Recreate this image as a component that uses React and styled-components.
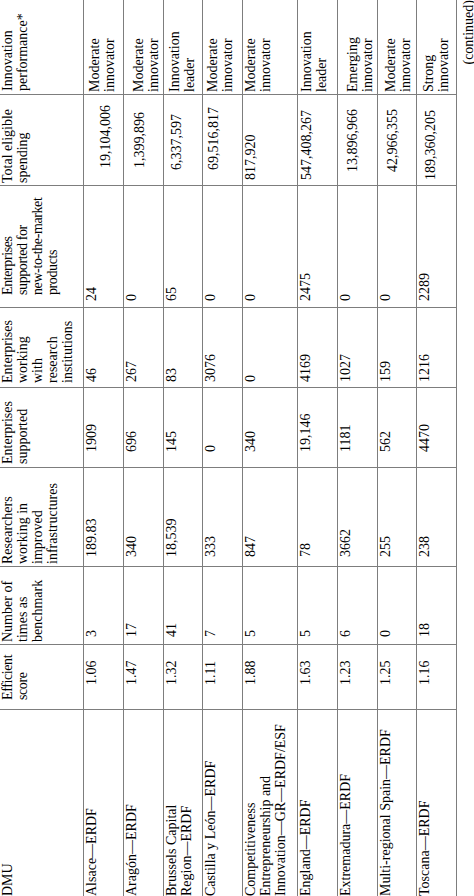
import React from 'react';
import styled, {createGlobalStyle} from 'styled-components';

const GlobalStyle = createGlobalStyle`
  html, body {
    margin: 0;
    padding: 0;
    background: #fff;
  }
`;

const Page = styled.div`
  width: 474px;
  height: 896px;
  overflow: hidden;
  background: #fff;
`;

// the table is typeset sideways, so it is laid out normally and turned
const Sheet = styled.div`
  width: 914px;
  transform-origin: 0 0;
  transform: translate(-3px, 899px) rotate(-90deg);
  font-family: "Liberation Serif", "Times New Roman", serif;
  font-size: 14px;
  line-height: 15px;
  color: #000;
`;

const Table = styled.table`
  border-collapse: collapse;
  table-layout: fixed;
  width: 914px;
`;

const Row = styled.tr`
  height: ${p => p.$h}px;
`;

const Head = styled.th`
  font-weight: normal;
  text-align: left;
  vertical-align: top;
  white-space: nowrap;
  border: 1px solid #7d7d7d;
  padding: 2px 0 0 ${p => p.$indent}px;
  letter-spacing: ${p => p.$tight ? '-0.4px' : 'normal'};
`;

const Cell = styled.td`
  text-align: left;
  vertical-align: top;
  white-space: nowrap;
  border: 1px solid #7d7d7d;
  padding: ${p => p.$drop}px 0 0 ${p => p.$indent}px;
`;

const Note = styled.div`
  text-align: right;
  padding: 4px 15px 0 0;
`;

const columns = [
  {w: 189, head: ['DMU'], hx: 2, bx: 2},
  {w: 65, head: ['Efficient', 'score'], hx: 9, bx: 24, tight: true},
  {w: 78, head: ['Number of', 'times as', 'benchmark'], hx: 2, bx: 7},
  {w: 99, head: ['Researchers', 'working in', 'improved', 'infrastructures'], hx: 2, bx: 9},
  {w: 80, head: ['Enterprises', 'supported'], hx: 3, bx: 15},
  {w: 80, head: ['Enterprises', 'working', 'with', 'research', 'institutions'], hx: 4, bx: 5},
  {w: 122, head: ['Enterprises', 'supported for', 'new-to-the-market', 'products'], hx: 12, bx: 6, tight: true},
  {w: 91, head: ['Total eligible', 'spending'], hx: 2, bx: 0},
  {w: 110, head: ['Innovation', 'performance*'], hx: 3, bx: 2},
];

const rows = [
  {h: 40, cells: [['Alsace—ERDF'], '1.06', '3', '189.83', '1909', '46', '24'], total: ['19,104,006', 17, 14], perf: ['Moderate', 'innovator'], pd: 3},
  {h: 40, cells: [['Aragón—ERDF'], '1.47', '17', '340', '696', '267', '0'], total: ['1,399,896', 17, 8], perf: ['Moderate', 'innovator'], pd: 7},
  {h: 39, cells: [['Brussels Capital', 'Region—ERDF'], '1.32', '41', '18,539', '145', '83', '65'], total: ['6,337,597', 15, 5], perf: ['Innovation', 'leader'], pd: 3},
  {h: 40, cells: [['Castilla y León—ERDF'], '1.11', '7', '333', '0', '3076', '0'], total: ['69,516,817', 15, 3], perf: ['Moderate', 'innovator'], pd: 2},
  {h: 55, cells: [['Competitiveness', 'Entrepreneurship and', 'Innovation—GR—ERDF/ESF'], '1.88', '5', '847', '340', '0', '0'], total: ['817,920', 5, 0], perf: ['Moderate', 'innovator'], pd: 0},
  {h: 40, cells: [['England—ERDF'], '1.63', '5', '78', '19,146', '4169', '2475'], total: ['547,408,267', 5, 1], perf: ['Innovation', 'leader'], pd: 1},
  {h: 40, cells: [['Extremadura—ERDF'], '1.23', '6', '3662', '1181', '1027', '0'], total: ['13,896,966', 13, 7], perf: ['Emerging', 'innovator'], pd: 7},
  {h: 39, cells: [['Multi-regional Spain—ERDF'], '1.25', '0', '255', '562', '159', '0'], total: ['42,966,355', 13, 7], perf: ['Moderate', 'innovator'], pd: 5},
  {h: 40, cells: [['Toscana—ERDF'], '1.16', '18', '238', '4470', '1216', '2289'], total: ['189,360,205', 5, 6], perf: ['Strong', 'innovator'], pd: 4},
];

const Lines = ({lines}) => lines.map((line, i) => (
  <React.Fragment key={i}>
    {i > 0 && <br />}
    {line}
  </React.Fragment>
));

const App = () => (
  <Page>
    <GlobalStyle />
    <Sheet>
      <Table>
        <colgroup>
          {columns.map((c, i) => <col key={i} style={{width: c.w}} />)}
        </colgroup>
        <thead>
          <Row $h={86}>
            {columns.map((c, i) => (
              <Head key={i} $indent={c.hx} $tight={c.tight}><Lines lines={c.head} /></Head>
            ))}
          </Row>
        </thead>
        <tbody>
          {rows.map((r, ri) => (
            <Row key={ri} $h={r.h}>
              {r.cells.map((v, ci) => (
                <Cell key={ci} $indent={columns[ci].bx} $drop={0}>
                  {Array.isArray(v) ? <Lines lines={v} /> : v}
                </Cell>
              ))}
              <Cell $indent={r.total[1]} $drop={r.total[2]}>{r.total[0]}</Cell>
              <Cell $indent={columns[8].bx} $drop={r.pd}><Lines lines={r.perf} /></Cell>
            </Row>
          ))}
        </tbody>
      </Table>
      <Note>(continued)</Note>
    </Sheet>
  </Page>
);

export {App as default};
